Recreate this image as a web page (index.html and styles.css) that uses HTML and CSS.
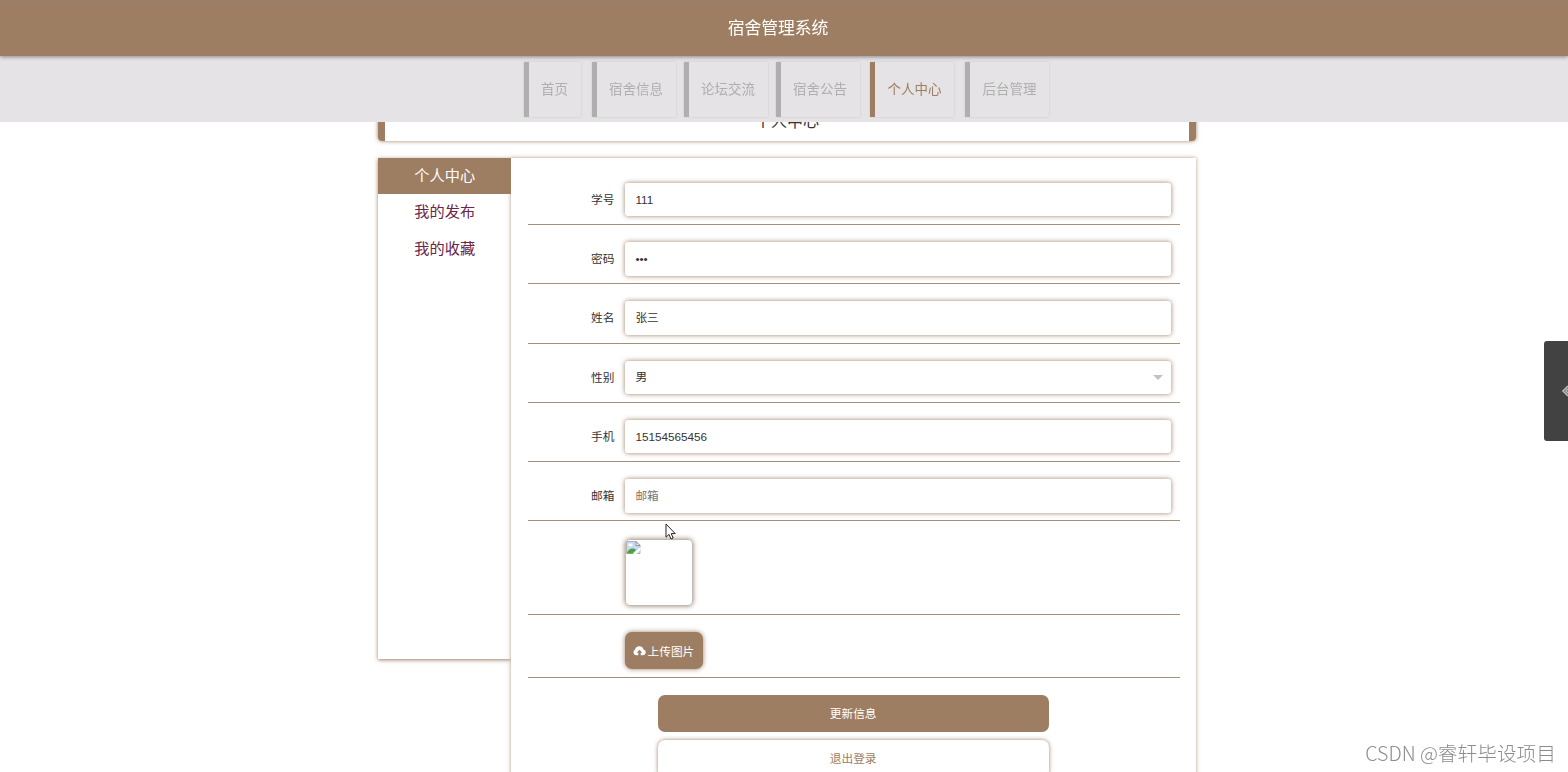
FILE: index.html
```html
<!DOCTYPE html>
<html lang="zh-CN">
<head>
  <meta charset="UTF-8" />
  <title>宿舍管理系统</title>
  <link rel="stylesheet" href="styles.css">
</head>
<body>
  <header class="top">
    <h1 class="title">宿舍管理系统</h1>
    <nav class="nav">
      <a class="nav-item">首页</a>
      <a class="nav-item">宿舍信息</a>
      <a class="nav-item">论坛交流</a>
      <a class="nav-item">宿舍公告</a>
      <a class="nav-item active">个人中心</a>
      <a class="nav-item">后台管理</a>
    </nav>
  </header>

  <main class="container">
    <h2 class="page-title">个人中心</h2>
    <div class="center">
      <aside class="menu">
        <a class="menu-item active">个人中心</a>
        <a class="menu-item">我的发布</a>
        <a class="menu-item">我的收藏</a>
      </aside>

      <form class="info">
        <div class="row"><label>学号</label><div class="field">111</div></div>
        <div class="row"><label>密码</label><div class="field password">•••</div></div>
        <div class="row"><label>姓名</label><div class="field">张三</div></div>
        <div class="row"><label>性别</label><div class="field select">男</div></div>
        <div class="row"><label>手机</label><div class="field">15154565456</div></div>
        <div class="row"><label>邮箱</label><div class="field placeholder">邮箱</div></div>
        <div class="row row-photo">
          <div class="photo">
            <svg width="15" height="15" viewBox="0 0 15 15">
              <path d="M.5 1.5h9.500l4 4v8H.5z" fill="#c6d8f4" stroke="#b4b4b4"/>
              <path d="M10 1.500v4h4z" fill="#fff" stroke="#8c9097"/>
              <ellipse cx="4.500" cy="5" rx="2.200" ry="1.400" fill="#fff"/>
              <path d="M1 13c1-4 6-6 9-3l-3.500 3.500H1z" fill="#48a43c"/>
              <path d="M6.500 14.500 14.500 7v3L10 14.500z" fill="#fff"/>
            </svg>
          </div>
        </div>
        <div class="row row-upload">
          <button type="button" class="upload">
            <svg width="13" height="10" viewBox="0 0 13 10">
              <path d="M3.300 9.300A3 3 0 0 1 2 3.700 4.400 4.400 0 0 1 10.500 3.400 3 3 0 0 1 10 9.300H7.700V6.700h1.600L6.500 3.700 3.700 6.700h1.600v2.600z" fill="#fff"/>
            </svg>
            上传图片
          </button>
        </div>
        <div class="actions">
          <button type="button" class="btn">更新信息</button>
          <button type="button" class="btn btn-plain">退出登录</button>
        </div>
      </form>
    </div>
  </main>

  <div class="side-tab">
    <svg width="7" height="14" viewBox="0 0 7 14">
      <path d="M7 2 2 7l5 5M7 4.800 5 7l2 2.200" fill="none" stroke="#bdbdbd" stroke-width="1.600"/>
    </svg>
  </div>
  <svg class="cursor" width="12" height="18" viewBox="0 0 12 18">
    <path d="M1 1v13.200l3-2.800 2 4.600 2.200-1-2-4.400h4z" fill="#fff" stroke="#222"/>
  </svg>
  <div class="watermark">CSDN @睿轩毕设项目</div>
</body>
</html>
```

FILE: styles.css
```css
* {
  box-sizing: border-box;
  margin: 0;
  padding: 0;
}

body {
  height: 772px;
  overflow: hidden;
  background: #fff;
  color: #333;
  font-family: "Liberation Sans", "Noto Sans CJK SC", sans-serif;
  font-size: 11.700px;
}

/* Header */
.top {
  position: fixed;
  top: 0;
  left: 0;
  width: 100%;
  z-index: 10;
}

.title {
  height: 56px;
  padding-right: 12px;
  border-top: 1px solid #94816f;
  background: #9d7e62;
  color: #fff;
  font-size: 16.800px;
  font-weight: 400;
  line-height: 56px;
  text-align: center;
  box-shadow: 0 1px 4px rgba(0, 0, 0, 0.4);
  position: relative;
}

.nav {
  display: flex;
  height: 66.400px;
  padding: 6.400px 0 0 524px;
  background: #e5e3e5;
}

.nav-item {
  height: 54.600px;
  margin-right: 8px;
  padding: 0 13px 0 12px;
  border-left: 5px solid #afafaf;
  box-shadow: 0 0 2px rgba(0, 0, 0, 0.12);
  color: #afafaf;
  font-size: 13.500px;
  font-weight: 400;
  line-height: 55px;
}

.nav-item:first-child,
.nav-item:nth-child(5) {
  margin-right: 11px;
}

.nav-item:nth-child(4) {
  margin-right: 10.400px;
}

.nav-item.active {
  border-color: #9d7e62;
  color: #9d7e62;
}

/* Content */
.container {
  width: 840px;
  height: 772px;
  margin-left: 367px;
  padding: 92px 11px 0;
  overflow: hidden;
}

.page-title {
  height: 49px;
  border: solid #9d7e62;
  border-width: 0 7px;
  border-radius: 4px;
  box-shadow: 0 0 4px #9d7e62;
  font-size: 16px;
  font-weight: 400;
  line-height: 59px;
  text-align: center;
}

.center {
  display: flex;
  align-items: flex-start;
  margin-top: 16.500px;
}

.menu {
  width: 133.400px;
  height: 501px;
  box-shadow: 0 1px 4px #9d7e62;
}

.menu-item {
  display: block;
  height: 36.700px;
  color: #6b2548;
  font-size: 15.200px;
  font-weight: 400;
  line-height: 36.500px;
  text-align: center;
}

.menu-item.active {
  background: #9d7e62;
  color: #fff;
}

.info {
  position: relative;
  flex: 1;
  height: 660px;
  padding: 8.400px 16.500px;
  background: #fff;
  box-shadow: 0 0 4px rgba(157, 126, 98, 0.8);
}

.row {
  display: flex;
  align-items: flex-start;
  height: 59.250px;
  padding: 17px 8.500px 0 0;
  border-bottom: 1px solid #a39077;
}

.row label {
  width: 86.500px;
  margin-right: 10.500px;
  line-height: 34px;
  text-align: right;
}

.field {
  flex: 1;
  height: 33.500px;
  padding: 0 10.500px;
  border-radius: 3px;
  box-shadow: 0 0 5px #9d7e62;
  line-height: 34px;
}

.placeholder {
  color: #757575;
}

.select {
  display: flex;
  justify-content: space-between;
  align-items: center;
}

.select::after {
  content: "";
  border: 5px solid transparent;
  border-top-color: #c2c2c2;
  border-bottom: 0;
  margin-right: -2px;
}

.row-photo {
  height: 94px;
  padding-left: 97px;
}

.photo {
  width: 68px;
  height: 67px;
  margin-top: 1px;
  border: 1px solid #bbb;
  border-radius: 5px;
  box-shadow: 0 0 5px #9d7e62;
}

.row-upload {
  height: 63px;
  padding-left: 97px;
}

.upload,
.btn {
  border: 0;
  border-radius: 7px;
  background: #9d7e62;
  color: #fff;
  font-family: inherit;
  font-size: 11.700px;
}

.upload {
  display: flex;
  align-items: center;
  justify-content: center;
  gap: 2px;
  width: 78px;
  height: 37px;
  padding-right: 1px;
  box-shadow: 0 0 5px #9d7e62;
}

.actions {
  display: flex;
  flex-direction: column;
  align-items: center;
  gap: 8px;
  padding-top: 16.500px;
}

.btn {
  width: 391px;
  height: 37px;
  padding: 0 1px 2px 0;
}

.btn-plain {
  background: #fff;
  color: #9d7e62;
  box-shadow: 0 0 4px #9d7e62;
}

/* Floating parts */
.side-tab {
  position: fixed;
  top: 341px;
  right: 0;
  display: flex;
  align-items: center;
  justify-content: flex-end;
  width: 24px;
  height: 100px;
  border-radius: 3px 0 0 3px;
  background: #424242;
}

.cursor {
  position: absolute;
  top: 523px;
  left: 665px;
}

.watermark {
  position: fixed;
  right: 12px;
  bottom: 4px;
  color: #8c8c8c;
  font-family: "Noto Sans CJK SC", sans-serif;
  font-size: 19.700px;
  font-weight: 300;
  line-height: 30px;
}
```
